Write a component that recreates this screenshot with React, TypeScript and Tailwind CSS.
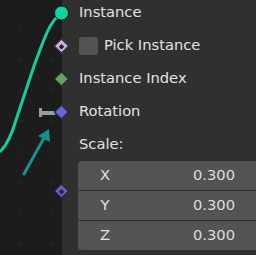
import React from 'react';

const font = { fontFamily: '"DejaVu Sans", "Liberation Sans", sans-serif' };

const Diamond: React.FC<{ color: string; dot?: boolean }> = ({ color, dot }) => (
  <div className={`absolute left-[-6px] top-1/2 -translate-y-1/2 w-[11px] h-[11px] rotate-45 border border-[#1b1b1b] flex items-center justify-center ${color}`}>
    {dot && <div className="w-[4px] h-[4px] bg-[#262626]" />}
  </div>
);

const Row: React.FC<{ children: React.ReactNode; socket?: React.ReactNode }> = ({ children, socket }) => (
  <div className="relative h-[33px] flex items-center pl-[17px]">
    {socket}
    {children}
  </div>
);

const dots = [29, 60, 90, 121, 152, 183, 213, 244];

const App: React.FC = () => {
  return (
    <div className="w-[256px] h-[255px] flex overflow-hidden bg-[#1c1c1c]" style={font}>
      {/* canvas with link and arrow */}
      <div className="relative w-[62px] h-full shrink-0">
        <svg className="absolute inset-0" width="62" height="255" viewBox="0 0 62 255">
          {dots.map((y) => (
            <g key={y} fill="#262626">
              <circle cx="21" cy={y} r="1.5" />
              <circle cx="51" cy={y} r="1.5" />
            </g>
          ))}
          <path d="M 60 15 C 50 20 43 42 34 66 L 16 120 C 12 134 8 144 0 152" fill="none" stroke="#14cf9c" strokeWidth="3" />
          <line x1="24" y1="174" x2="44" y2="138" stroke="#13938f" strokeWidth="3" strokeLinecap="round" />
          <polygon points="49,129 50,142 38,136" fill="#13938f" />
          <rect x="39" y="108" width="3" height="9" fill="#9c9c9c" />
          <rect x="41" y="111" width="14" height="4" fill="#9c9c9c" />
        </svg>
      </div>

      {/* node body */}
      <div className="relative flex-1 bg-[#303030] text-[#e2e2e2] text-[14.7px] leading-none">
        <div className="-mt-[4px]">
          <Row
            socket={
              <div className="absolute left-[-8px] top-1/2 -translate-y-1/2 w-[15px] h-[15px] rounded-full bg-[#0fd6a1] border border-[#1b1b1b]" />
            }
          >
            <span>Instance</span>
          </Row>
          <Row socket={<Diamond color="bg-[#d7ace4]" dot />}>
            <div className="w-[19px] h-[18px] rounded-[3px] bg-[#545454] mr-[6px]" />
            <span>Pick Instance</span>
          </Row>
          <Row socket={<Diamond color="bg-[#63a363]" />}>
            <span>Instance Index</span>
          </Row>
          <Row socket={<Diamond color="bg-[#6767d6]" />}>
            <span>Rotation</span>
          </Row>
          <Row>
            <span>Scale:</span>
          </Row>
        </div>

        <div className="relative ml-[16px]">
          <div className="absolute left-[-22px] top-[30px] -translate-y-1/2 w-[11px] h-[11px] rotate-45 border border-[#1b1b1b] bg-[#6363c7] flex items-center justify-center">
            <div className="w-[4px] h-[4px] bg-[#262626]" />
          </div>
          <div className="flex flex-col gap-px rounded-l-[4px] overflow-hidden">
            {['X', 'Y', 'Z'].map((axis) => (
              <div key={axis} className="h-[29px] bg-[#545454] flex items-center">
                <span className="w-[54px] text-center">{axis}</span>
                <span className="flex-1 text-right pr-[21px] text-[#dddddd]">0.300</span>
              </div>
            ))}
          </div>
        </div>
      </div>
    </div>
  );
};

export default App;
